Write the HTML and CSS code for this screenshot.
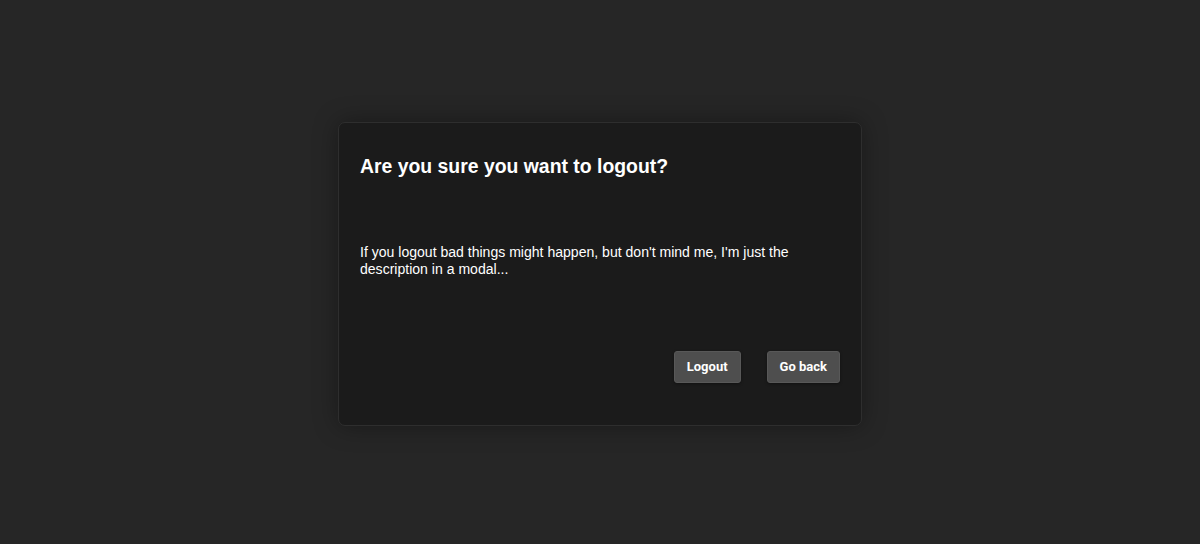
FILE: index.html
```html
<!DOCTYPE html>
<html>
<head>
<meta charset="utf-8">
<link rel="stylesheet" href="styles.css">
</head>
<body>
<div class="modal">
  <h2 class="title">Are you sure you want to logout?</h2>
  <p class="desc">If you logout bad things might happen, but don't mind me, I'm just the description in a modal...</p>
  <div class="actions">
    <button class="btn">Logout</button>
    <button class="btn">Go back</button>
  </div>
</div>
</body>
</html>
```
FILE: styles.css
```css
html, body {
  margin: 0;
  height: 100%;
}
body {
  background: #262626;
  display: flex;
  align-items: center;
  justify-content: center;
  font-family: "Liberation Sans", Arial, sans-serif;
  color: #fff;
}
.modal {
  box-sizing: border-box;
  width: 524px;
  height: 304px;
  background: #1b1b1b;
  border: 1px solid #2e2e2e;
  border-radius: 7px;
  box-shadow: 0 0 24px rgba(0, 0, 0, 0.35);
  padding: 30px 21px 41px 20px;
  display: flex;
  flex-direction: column;
  margin-top: 3px;
}
.title {
  margin: 0 0 0 1px;
  font-size: 19.4px;
  line-height: 26px;
  font-weight: bold;
}
.desc {
  margin: 65px 0 0 1px;
  font-size: 14.05px;
  line-height: 17px;
  max-width: 450px;
}
.actions {
  margin-top: auto;
  margin-bottom: 1px;
  display: flex;
  justify-content: flex-end;
  gap: 26px;
}
.btn {
  box-sizing: border-box;
  font-family: Roboto, "Liberation Sans", sans-serif;
  font-size: 13px;
  font-weight: bold;
  color: #fff;
  background: #4e4e4e;
  border: 1px solid #585858;
  border-radius: 3px;
  height: 32px;
  padding: 0 12px;
  box-shadow: 0 1px 3px rgba(0,0,0,0.35);
}
```
